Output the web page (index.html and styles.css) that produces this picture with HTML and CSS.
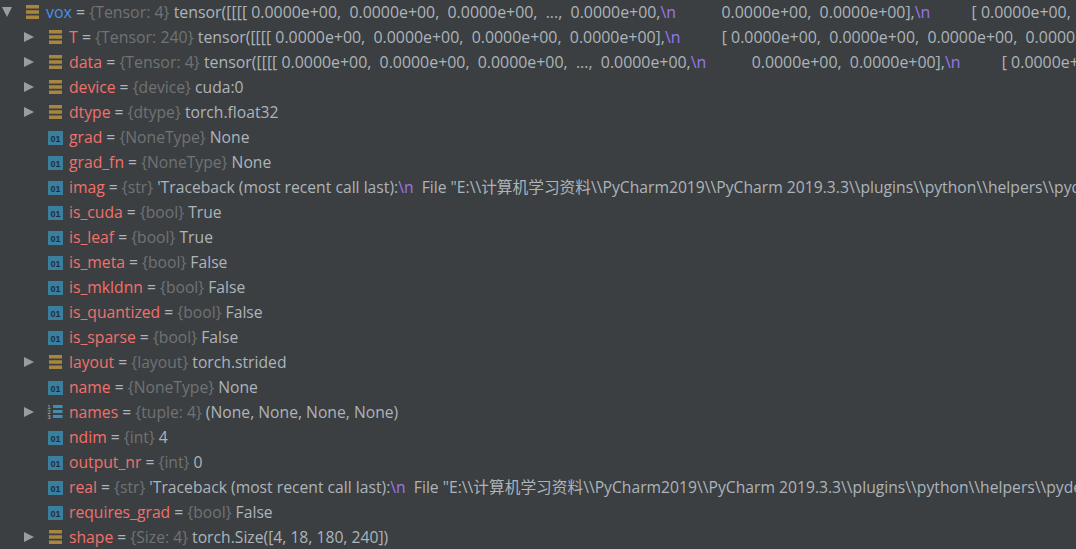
FILE: index.html
```html
<!DOCTYPE html>
<html lang="en">
<head>
<meta charset="utf-8">
<title>Variables</title>
<link rel="stylesheet" href="styles.css">
</head>
<body>
<svg class="defs" width="0" height="0" aria-hidden="true">
  <symbol id="stack" viewBox="0 0 13 14"><path fill="#a8863f" d="M0 0h13v3.4H0zM0 5.2h13v3.6H0zM0 10.6h13V14H0z"/></symbol>
  <symbol id="prim" viewBox="0 0 15 14"><rect width="15" height="14" fill="#3b7f9f"/><text x="7.5" y="10.5" text-anchor="middle" class="bits">01</text></symbol>
  <symbol id="list" viewBox="0 0 15 15"><path fill="#3d90b3" d="M5.5 1H15v3H5.500zM5.500 6H15v3H5.500zM5.500 11H15v3H5.500z"/><text x="0" y="5" class="num">1</text><text x="0" y="10" class="num">2</text><text x="0" y="15" class="num">3</text></symbol>
</svg>
<div class="tree">
  <div class="row root"><span class="arrow down"></span><svg class="ico stack"><use href="#stack"/></svg><span class="line tensor"><span class="root-name">vox</span> = <span class="type">{Tensor: 4}</span> tensor([[[[ 0.0000e+00,  0.0000e+00,  0.0000e+00,  ...,  0.0000e+00,<span class="esc">\n</span>           0.0000e+00,  0.0000e+00],<span class="esc">\n</span>          [ 0.0000e+00,</span></div>
  <div class="row"><span class="arrow right"></span><svg class="ico stack"><use href="#stack"/></svg><span class="line tensor"><span class="name">T</span> = <span class="type">{Tensor: 240}</span> tensor([[[[ 0.0000e+00,  0.0000e+00,  0.0000e+00,  0.0000e+00],<span class="esc">\n</span>          [ 0.0000e+00,  0.0000e+00,  0.0000e+00,  0.0000e+00],</span></div>
  <div class="row"><span class="arrow right"></span><svg class="ico stack"><use href="#stack"/></svg><span class="line tensor"><span class="name">data</span> = <span class="type">{Tensor: 4}</span> tensor([[[[ 0.0000e+00,  0.0000e+00,  0.0000e+00,  ...,  0.0000e+00,<span class="esc">\n</span>           0.0000e+00,  0.0000e+00],<span class="esc">\n</span>          [ 0.0000e+00,</span></div>
  <div class="row"><span class="arrow right"></span><svg class="ico stack"><use href="#stack"/></svg><span class="line"><span class="name">device</span> = <span class="type">{device}</span> cuda:0</span></div>
  <div class="row"><span class="arrow right"></span><svg class="ico stack"><use href="#stack"/></svg><span class="line"><span class="name">dtype</span> = <span class="type">{dtype}</span> torch.float32</span></div>
  <div class="row"><span class="arrow none"></span><svg class="ico prim"><use href="#prim"/></svg><span class="line"><span class="name">grad</span> = <span class="type">{NoneType}</span> None</span></div>
  <div class="row"><span class="arrow none"></span><svg class="ico prim"><use href="#prim"/></svg><span class="line"><span class="name">grad_fn</span> = <span class="type">{NoneType}</span> None</span></div>
  <div class="row"><span class="arrow none"></span><svg class="ico prim"><use href="#prim"/></svg><span class="line"><span class="name">imag</span> = <span class="type">{str}</span> 'Traceback (most recent call last):<span class="esc">\n</span>  File "E:\\计算机学习资料\\PyCharm2019\\PyCharm 2019.3.3\\plugins\\python\\helpers\\pydev\\</span></div>
  <div class="row"><span class="arrow none"></span><svg class="ico prim"><use href="#prim"/></svg><span class="line"><span class="name">is_cuda</span> = <span class="type">{bool}</span> True</span></div>
  <div class="row"><span class="arrow none"></span><svg class="ico prim"><use href="#prim"/></svg><span class="line"><span class="name">is_leaf</span> = <span class="type">{bool}</span> True</span></div>
  <div class="row"><span class="arrow none"></span><svg class="ico prim"><use href="#prim"/></svg><span class="line"><span class="name">is_meta</span> = <span class="type">{bool}</span> False</span></div>
  <div class="row"><span class="arrow none"></span><svg class="ico prim"><use href="#prim"/></svg><span class="line"><span class="name">is_mkldnn</span> = <span class="type">{bool}</span> False</span></div>
  <div class="row"><span class="arrow none"></span><svg class="ico prim"><use href="#prim"/></svg><span class="line"><span class="name">is_quantized</span> = <span class="type">{bool}</span> False</span></div>
  <div class="row"><span class="arrow none"></span><svg class="ico prim"><use href="#prim"/></svg><span class="line"><span class="name">is_sparse</span> = <span class="type">{bool}</span> False</span></div>
  <div class="row"><span class="arrow right"></span><svg class="ico stack"><use href="#stack"/></svg><span class="line"><span class="name">layout</span> = <span class="type">{layout}</span> torch.strided</span></div>
  <div class="row"><span class="arrow none"></span><svg class="ico prim"><use href="#prim"/></svg><span class="line"><span class="name">name</span> = <span class="type">{NoneType}</span> None</span></div>
  <div class="row"><span class="arrow right"></span><svg class="ico list"><use href="#list"/></svg><span class="line"><span class="name">names</span> = <span class="type">{tuple: 4}</span> (None, None, None, None)</span></div>
  <div class="row"><span class="arrow none"></span><svg class="ico prim"><use href="#prim"/></svg><span class="line"><span class="name">ndim</span> = <span class="type">{int}</span> 4</span></div>
  <div class="row"><span class="arrow none"></span><svg class="ico prim"><use href="#prim"/></svg><span class="line"><span class="name">output_nr</span> = <span class="type">{int}</span> 0</span></div>
  <div class="row"><span class="arrow none"></span><svg class="ico prim"><use href="#prim"/></svg><span class="line"><span class="name">real</span> = <span class="type">{str}</span> 'Traceback (most recent call last):<span class="esc">\n</span>  File "E:\\计算机学习资料\\PyCharm2019\\PyCharm 2019.3.3\\plugins\\python\\helpers\\pydev\\</span></div>
  <div class="row"><span class="arrow none"></span><svg class="ico prim"><use href="#prim"/></svg><span class="line"><span class="name">requires_grad</span> = <span class="type">{bool}</span> False</span></div>
  <div class="row"><span class="arrow right"></span><svg class="ico stack"><use href="#stack"/></svg><span class="line"><span class="name">shape</span> = <span class="type">{Size: 4}</span> torch.Size([4, 18, 180, 240])</span></div>
</div>
</body>
</html>
```
FILE: styles.css
```css
html, body {
  margin: 0;
  height: 100%;
  background: #3c3f41;
  overflow: hidden;
}
.defs { position: absolute; }
.bits { font: 700 9px "Liberation Sans", sans-serif; fill: #1f2f38; }
.num { font: 5.5px "Liberation Sans", sans-serif; fill: #bbbbbb; }
.tree {
  font-family: "Open Sans", "Noto Sans CJK SC", sans-serif;
  font-size: 15.7px;
  color: #acb4bb;
}
.row {
  display: flex;
  align-items: center;
  box-sizing: border-box;
  height: 25px;
  padding: 0 0 2px 24px;
}
.row.root { padding-left: 2px; }
.arrow {
  flex: none;
  width: 10px;
  height: 10px;
  margin-right: 15px;
}
.arrow.right {
  border-style: solid;
  border-width: 5.5px 0 5.5px 10px;
  border-color: transparent transparent transparent #9a9c9e;
  width: 0;
  height: 0;
}
.arrow.down {
  border-style: solid;
  border-width: 10px 5.5px 0;
  border-color: #9a9c9e transparent transparent;
  width: 0;
  height: 0;
  margin-right: 14px;
}
.ico { flex: none; }
.ico.stack { width: 13px; height: 14px; margin-right: 7px; }
.ico.prim { width: 15px; height: 14px; margin: 2px 6px 0 -1px; }
.ico.list { width: 16px; height: 15px; margin: 0 6px 0 -2px; }
.line { flex: none; white-space: pre; }
.line.tensor { font-size: 15.9px; }
.name { color: #f2706c; }
.root-name { color: #4a8fe8; }
.type { color: #6f7375; }
.esc { color: #9876f0; }
```
